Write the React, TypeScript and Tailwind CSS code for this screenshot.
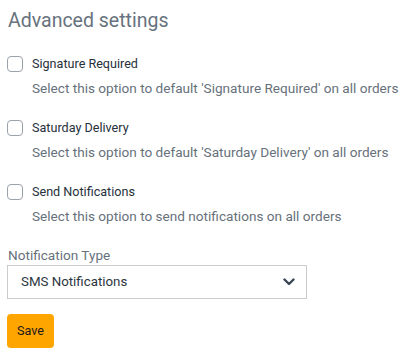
import { useState } from "react";

const options = [
    { label: "Signature Required", desc: "Select this option to default 'Signature Required' on all orders" },
    { label: "Saturday Delivery", desc: "Select this option to default 'Saturday Delivery' on all orders" },
    { label: "Send Notifications", desc: "Select this option to send notifications on all orders" },
];

export default function App() {
    const [checked, setChecked] = useState<boolean[]>([false, false, false]);

    return (
        <div className="bg-white px-2 pt-2 pb-2 font-['Roboto','Liberation_Sans',sans-serif]">
            <h2 className="text-[19.5px] leading-[25px] text-[#67727e] font-normal">Advanced settings</h2>

            <div className="mt-[21px] flex flex-col gap-[20px]">
                {options.map((o, i) => (
                    <div key={o.label}>
                        <label className="flex items-center gap-[9px] h-[20px] cursor-pointer">
                            <input
                                type="checkbox"
                                checked={checked[i]}
                                onChange={() => setChecked(checked.map((c, j) => (j === i ? !c : c)))}
                                className="appearance-none -ml-px w-[16px] h-[16px] rounded-[4px] border border-[#9aa2a9] bg-white checked:bg-[#ffa500]"
                            />
                            <span className="text-[12.6px] text-[#26313b]">{o.label}</span>
                        </label>
                        <p className="mt-[4px] ml-[24px] text-[13.6px] leading-[20px] text-[#67717b]">{o.desc}</p>
                    </div>
                ))}
            </div>

            <div className="mt-[19px]">
                <div className="text-[13.6px] leading-[20px] text-[#67717b]">Notification Type</div>
                <div className="-ml-px w-[300px] h-[34px] border border-[#cccccc] flex items-center justify-between pl-[13px] pr-[11px]">
                    <span className="text-[13.3px] text-[#2c3640]">SMS Notifications</span>
                    <svg width="12" height="8" viewBox="0 0 12 8" fill="none">
                        <path d="M1.5 1.5 L6 6 L10.5 1.5" stroke="#3a4754" strokeWidth="2.4" strokeLinecap="round" strokeLinejoin="round" />
                    </svg>
                </div>
            </div>

            <button className="-ml-px mt-[15px] h-[34px] px-[10px] rounded-[4px] bg-[#ffa500] text-[12.6px] text-[#1a1a1a]">Save</button>
        </div>
    );
}
